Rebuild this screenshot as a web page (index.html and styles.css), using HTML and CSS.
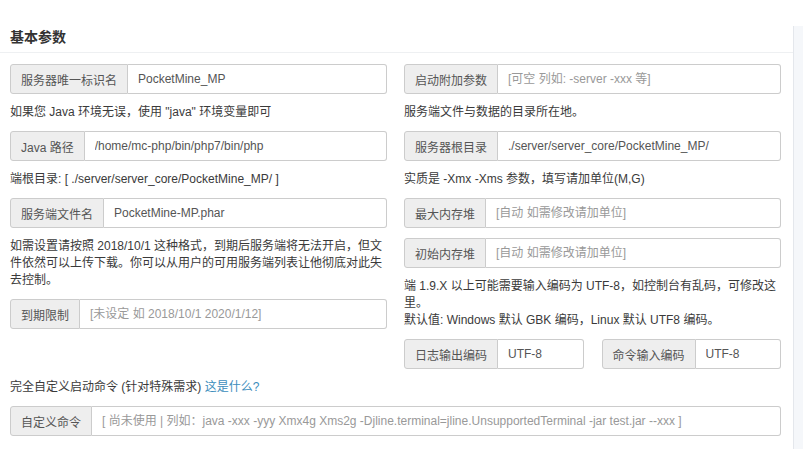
FILE: index.html
```html
<!DOCTYPE html>
<html lang="zh-CN">
<head>
<meta charset="utf-8">
<title>基本参数</title>
<link rel="stylesheet" href="styles.css">
</head>
<body>
<div class="page">
  <div class="panel">
    <div class="panel-head"><h3 class="title">基本参数</h3></div>
    <div class="panel-body">
      <div class="cols">
        <div class="col">
          <div class="ig"><span class="addon">服务器唯一标识名</span><input class="field" type="text" value="PocketMine_MP"></div>
          <p class="help">如果您 Java 环境无误，使用 "java" 环境变量即可</p>
          <div class="ig"><span class="addon">Java 路径</span><input class="field" type="text" value="/home/mc-php/bin/php7/bin/php"></div>
          <p class="help">端根目录: [ ./server/server_core/PocketMine_MP/ ]</p>
          <div class="ig"><span class="addon">服务端文件名</span><input class="field" type="text" value="PocketMine-MP.phar"></div>
          <p class="help">如需设置请按照 2018/10/1 这种格式，到期后服务端将无法开启，但文件依然可以上传下载。你可以从用户的可用服务端列表让他彻底对此失去控制。</p>
          <div class="ig"><span class="addon">到期限制</span><input class="field" type="text" placeholder="[未设定 如 2018/10/1 2020/1/12]"></div>
        </div>
        <div class="col">
          <div class="ig"><span class="addon">启动附加参数</span><input class="field" type="text" placeholder="[可空 列如: -server -xxx 等]"></div>
          <p class="help">服务端文件与数据的目录所在地。</p>
          <div class="ig"><span class="addon">服务器根目录</span><input class="field" type="text" value="./server/server_core/PocketMine_MP/"></div>
          <p class="help">实质是 -Xmx -Xms 参数，填写请加单位(M,G)</p>
          <div class="ig"><span class="addon">最大内存堆</span><input class="field" type="text" placeholder="[自动 如需修改请加单位]"></div>
          <div class="ig"><span class="addon">初始内存堆</span><input class="field" type="text" placeholder="[自动 如需修改请加单位]"></div>
          <p class="help">端 1.9.X 以上可能需要输入编码为 UTF-8，如控制台有乱码，可修改这里。<br>默认值: Windows 默认 GBK 编码，Linux 默认 UTF8 编码。</p>
          <div class="enc">
            <div class="ig"><span class="addon">日志输出编码</span><input class="field" type="text" value="UTF-8"></div>
            <div class="ig"><span class="addon">命令输入编码</span><input class="field" type="text" value="UTF-8"></div>
          </div>
        </div>
      </div>
      <p class="help wide">完全自定义启动命令 (针对特殊需求) <a class="link" href="#">这是什么?</a></p>
      <div class="ig"><span class="addon">自定义命令</span><input class="field" type="text" placeholder="[ 尚未使用 | 列如：java -xxx -yyy Xmx4g Xms2g -Djline.terminal=jline.UnsupportedTerminal -jar test.jar --xxx ]"></div>
    </div>
  </div>
  <div class="side"></div>
</div>
</body>
</html>
```
FILE: styles.css
```css
html, body {
  margin: 0;
  padding: 0;
  background: #fff;
}
body {
  font-family: "Liberation Sans", Arial, "Noto Sans CJK SC", sans-serif;
  font-size: 12px;
  color: #333;
}
.page {
  display: flex;
  width: 803px;
  height: 449px;
  overflow: hidden;
}
.panel {
  width: 793px;
  flex: none;
}
.panel-head {
  height: 53px;
  box-sizing: border-box;
  padding: 27px 10px 0;
  border-bottom: 1px solid #eef0f2;
}
.title {
  margin: 0;
  font-size: 14px;
  line-height: 20px;
  font-weight: bold;
  color: #333;
}
.panel-body {
  padding: 11px 12px 0 10px;
}
.cols {
  display: grid;
  grid-template-columns: 377px 377px;
  column-gap: 17px;
  align-items: start;
}
.col {
  display: flex;
  flex-direction: column;
  gap: 10px;
  min-width: 0;
}
.help {
  margin: 0;
  line-height: 17px;
  color: #3a3a3a;
}
.help.wide {
  margin: 10px 0;
}
.link {
  color: #3c8dbc;
  text-decoration: none;
}
.ig {
  display: flex;
  height: 30px;
  min-width: 0;
}
.addon {
  flex: none;
  display: flex;
  align-items: center;
  padding: 0 10px;
  background: #eee;
  border: 1px solid #ccc;
  border-radius: 3px 0 0 3px;
  color: #555;
  font-size: 12px;
  white-space: nowrap;
}
.field {
  flex: 1 1 0;
  width: 0;
  min-width: 0;
  height: 30px;
  box-sizing: border-box;
  margin: 0;
  padding: 0 10px;
  border: 1px solid #ccc;
  border-left: 0;
  border-radius: 0 3px 3px 0;
  background: #fff;
  font-family: inherit;
  font-size: 12px;
  color: #555;
  outline: none;
}
.field::placeholder {
  color: #999;
}
.enc {
  display: grid;
  grid-template-columns: minmax(0, 1fr) minmax(0, 1fr);
  column-gap: 18px;
}
.side {
  flex: 1;
  margin-top: 26px;
  background: #f5f7fa;
  border-left: 1px solid #e4e7ec;
}
```
